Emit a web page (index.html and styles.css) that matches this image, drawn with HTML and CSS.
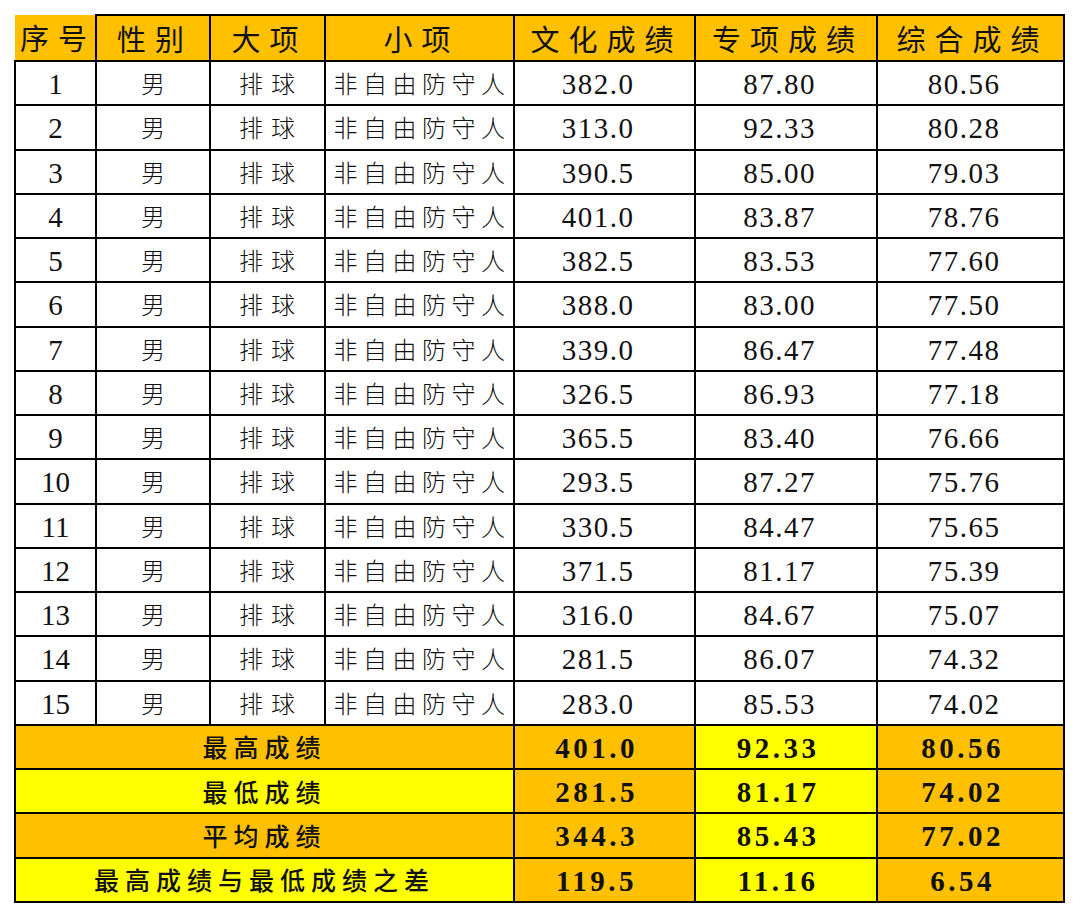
FILE: index.html
```html
<!DOCTYPE html>
<html lang="zh-CN">
<head>
<meta charset="utf-8">
<title>成绩表</title>
<link rel="stylesheet" href="styles.css">
</head>
<body>
<div class="page">
<table class="grid">
  <colgroup>
    <col class="c1"><col class="c2"><col class="c3"><col class="c4"><col class="c5"><col class="c6"><col class="c7">
  </colgroup>
  <thead>
    <tr class="head">
      <th class="first">序号</th>
      <th>性别</th>
      <th>大项</th>
      <th>小项</th>
      <th>文化成绩</th>
      <th>专项成绩</th>
      <th>综合成绩</th>
    </tr>
  </thead>
  <tbody>
    <tr><td class="no">1</td><td class="sex">男</td><td class="cat">排球</td><td class="sub">非自由防守人</td><td class="num">382.0</td><td class="num">87.80</td><td class="num">80.56</td></tr>
    <tr><td class="no">2</td><td class="sex">男</td><td class="cat">排球</td><td class="sub">非自由防守人</td><td class="num">313.0</td><td class="num">92.33</td><td class="num">80.28</td></tr>
    <tr><td class="no">3</td><td class="sex">男</td><td class="cat">排球</td><td class="sub">非自由防守人</td><td class="num">390.5</td><td class="num">85.00</td><td class="num">79.03</td></tr>
    <tr><td class="no">4</td><td class="sex">男</td><td class="cat">排球</td><td class="sub">非自由防守人</td><td class="num">401.0</td><td class="num">83.87</td><td class="num">78.76</td></tr>
    <tr><td class="no">5</td><td class="sex">男</td><td class="cat">排球</td><td class="sub">非自由防守人</td><td class="num">382.5</td><td class="num">83.53</td><td class="num">77.60</td></tr>
    <tr><td class="no">6</td><td class="sex">男</td><td class="cat">排球</td><td class="sub">非自由防守人</td><td class="num">388.0</td><td class="num">83.00</td><td class="num">77.50</td></tr>
    <tr><td class="no">7</td><td class="sex">男</td><td class="cat">排球</td><td class="sub">非自由防守人</td><td class="num">339.0</td><td class="num">86.47</td><td class="num">77.48</td></tr>
    <tr><td class="no">8</td><td class="sex">男</td><td class="cat">排球</td><td class="sub">非自由防守人</td><td class="num">326.5</td><td class="num">86.93</td><td class="num">77.18</td></tr>
    <tr><td class="no">9</td><td class="sex">男</td><td class="cat">排球</td><td class="sub">非自由防守人</td><td class="num">365.5</td><td class="num">83.40</td><td class="num">76.66</td></tr>
    <tr><td class="no">10</td><td class="sex">男</td><td class="cat">排球</td><td class="sub">非自由防守人</td><td class="num">293.5</td><td class="num">87.27</td><td class="num">75.76</td></tr>
    <tr><td class="no">11</td><td class="sex">男</td><td class="cat">排球</td><td class="sub">非自由防守人</td><td class="num">330.5</td><td class="num">84.47</td><td class="num">75.65</td></tr>
    <tr><td class="no">12</td><td class="sex">男</td><td class="cat">排球</td><td class="sub">非自由防守人</td><td class="num">371.5</td><td class="num">81.17</td><td class="num">75.39</td></tr>
    <tr><td class="no">13</td><td class="sex">男</td><td class="cat">排球</td><td class="sub">非自由防守人</td><td class="num">316.0</td><td class="num">84.67</td><td class="num">75.07</td></tr>
    <tr><td class="no">14</td><td class="sex">男</td><td class="cat">排球</td><td class="sub">非自由防守人</td><td class="num">281.5</td><td class="num">86.07</td><td class="num">74.32</td></tr>
    <tr><td class="no">15</td><td class="sex">男</td><td class="cat">排球</td><td class="sub">非自由防守人</td><td class="num">283.0</td><td class="num">85.53</td><td class="num">74.02</td></tr>
    <tr class="sum"><td colspan="4" class="label orange">最高成绩</td><td class="snum orange">401.0</td><td class="snum yellow">92.33</td><td class="snum orange">80.56</td></tr>
    <tr class="sum"><td colspan="4" class="label yellow">最低成绩</td><td class="snum orange">281.5</td><td class="snum yellow">81.17</td><td class="snum orange">74.02</td></tr>
    <tr class="sum"><td colspan="4" class="label orange">平均成绩</td><td class="snum orange">344.3</td><td class="snum yellow">85.43</td><td class="snum orange">77.02</td></tr>
    <tr class="sum"><td colspan="4" class="label yellow long">最高成绩与最低成绩之差</td><td class="snum orange">119.5</td><td class="snum yellow">11.16</td><td class="snum orange">6.54</td></tr>
  </tbody>
</table>
</div>
</body>
</html>
```

FILE: styles.css
```css
html, body {
  margin: 0;
  padding: 0;
  background: #ffffff;
}

.page {
  padding: 14px 0 0 14px;
}

.grid {
  border-collapse: collapse;
  table-layout: fixed;
  width: 1051px;
  color: #111111;
}

.c1 { width: 81px; }
.c2 { width: 114px; }
.c3 { width: 115px; }
.c4 { width: 189px; }
.c5 { width: 181px; }
.c6 { width: 182px; }
.c7 { width: 187px; }

.grid th,
.grid td {
  border: 2px solid #000000;
  padding: 0;
  text-align: center;
  vertical-align: middle;
  white-space: nowrap;
}

.grid .head th {
  height: 44px;
  background: #ffc000;
  font-family: "Noto Sans CJK SC", sans-serif;
  font-weight: 400;
  font-size: 29px;
  letter-spacing: 9px;
  padding-left: 4px;
  line-height: 1;
}

.grid .head th.first {
  border-top: none;
  border-left: none;
  padding-left: 5px;
}

.grid tbody tr {
  height: 44.26px;
}

.grid .no,
.grid .num {
  font-family: "Liberation Serif", "Times New Roman", serif;
  font-size: 29px;
  line-height: 1;
  padding-top: 3px;
}

.grid .num {
  letter-spacing: 1.5px;
  padding-right: 13px;
}

.grid .sex,
.grid .cat,
.grid .sub {
  font-family: "Noto Sans CJK SC", sans-serif;
  font-weight: 300;
  font-size: 24px;
  line-height: 1;
}

.grid .cat {
  letter-spacing: 8px;
  padding-left: 7px;
}

.grid .sub {
  letter-spacing: 5.5px;
  padding-left: 5px;
}

.grid .label {
  font-family: "Noto Sans CJK SC", sans-serif;
  font-weight: 500;
  font-size: 25px;
  letter-spacing: 6px;
  line-height: 1;
}

.grid .snum {
  font-family: "Liberation Serif", "Times New Roman", serif;
  font-weight: 700;
  font-size: 29px;
  letter-spacing: 3.5px;
  padding-right: 16px;
  padding-top: 3px;
  line-height: 1;
}

.orange { background: #ffc000; }
.yellow { background: #ffff00; }
```
